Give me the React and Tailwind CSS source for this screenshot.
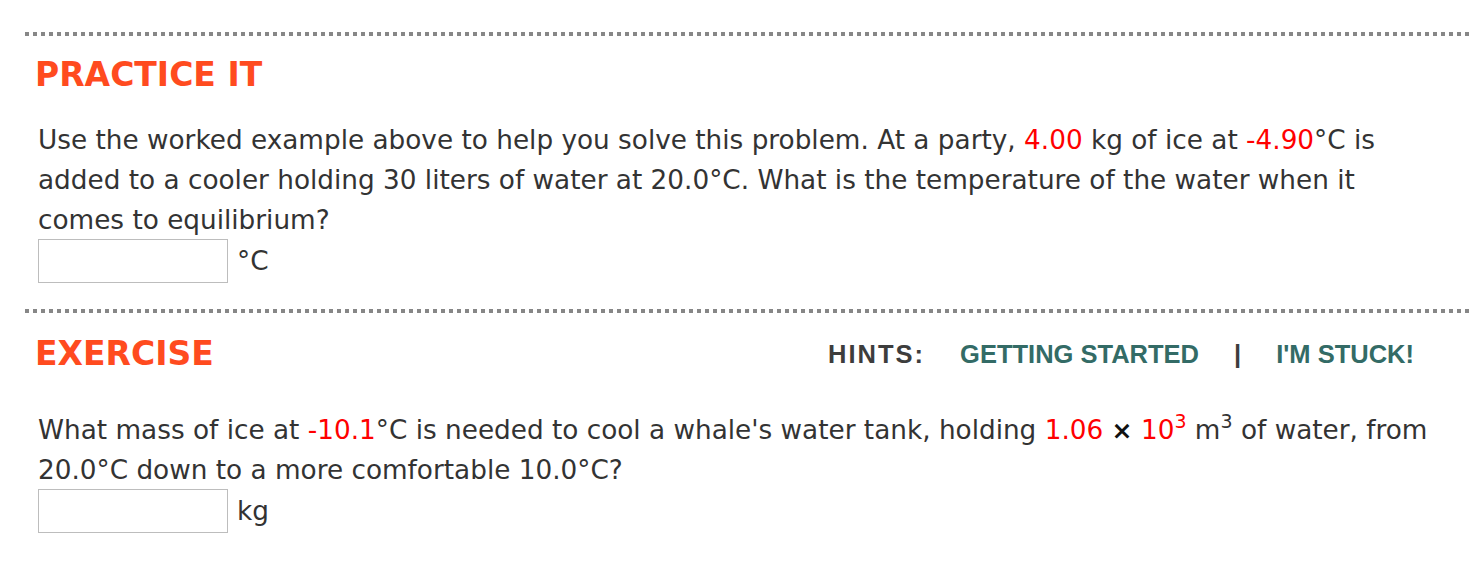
import React from 'react';

const Dots = ({ className = '' }) => (
  <div className={`h-1 bg-[repeating-linear-gradient(to_right,#878787_0_4px,transparent_4px_8px)] ${className}`} />
);

const Red = ({ children }) => <span className="text-[#ff0000]">{children}</span>;

const AnswerBox = ({ unit }) => (
  <div className="flex items-center -mt-px">
    <input type="text" className="w-[190px] h-[44px] border border-[#bdbdbd] bg-white outline-none" />
    <span className="ml-[9px] text-[26.3px] leading-[40px]">{unit}</span>
  </div>
);

export default function App() {
  return (
    <div className="min-h-[561px] bg-white pl-[25px] pt-8 font-['DejaVu_Sans',Verdana,sans-serif] text-[#333]">
      {/* Practice it */}
      <Dots />
      <div className="pl-[13px] pr-[30px]">
        <h2 className="mt-[19px] -ml-[3px] text-[33px] font-bold leading-[40px] text-[#ff4b1f]">PRACTICE IT</h2>
        <p className="mt-[25px] text-[26.3px] leading-[40px]">
          Use the worked example above to help you solve this problem. At a party, <Red>4.00</Red> kg of ice at{' '}
          <Red>-4.90</Red>°C is
          <br />
          added to a cooler holding 30 liters of water at 20.0°C. What is the temperature of the water when it
          <br />
          comes to equilibrium?
        </p>
        <AnswerBox unit="°C" />
      </div>

      {/* Exercise */}
      <Dots className="mt-[26px]" />
      <div className="pl-[13px] pr-[30px]">
        <div className="mt-[21px] flex items-center justify-between">
          <h2 className="-ml-[3px] text-[33px] font-bold leading-[40px] text-[#ff4b1f]">EXERCISE</h2>
          <div className="mr-[26px] flex items-center gap-[35px] font-['Liberation_Sans',Arial,sans-serif] text-[25.5px] font-bold leading-[40px]">
            <span className="tracking-[2px] text-[#3d3d3d]">HINTS:</span>
            <a href="#" className="text-[#336b66]">GETTING STARTED</a>
            <span className="text-[#3d3d3d]">|</span>
            <a href="#" className="text-[#336b66]">I'M STUCK!</a>
          </div>
        </div>
        <p className="mt-[36px] text-[26.3px] leading-[40px]">
          What mass of ice at <Red>-10.1</Red>°C is needed to cool a whale's water tank, holding <Red>1.06</Red>{' '}
          <span className="text-[25px] leading-none font-bold text-[#111]">×</span>{' '}
          <Red>
            10<sup className="text-[19px] -top-[0.6em]">3</sup>
          </Red>{' '}
          m<sup className="text-[19px] -top-[0.6em]">3</sup> of water, from
          <br />
          20.0°C down to a more comfortable 10.0°C?
        </p>
        <AnswerBox unit="kg" />
      </div>
    </div>
  );
}
